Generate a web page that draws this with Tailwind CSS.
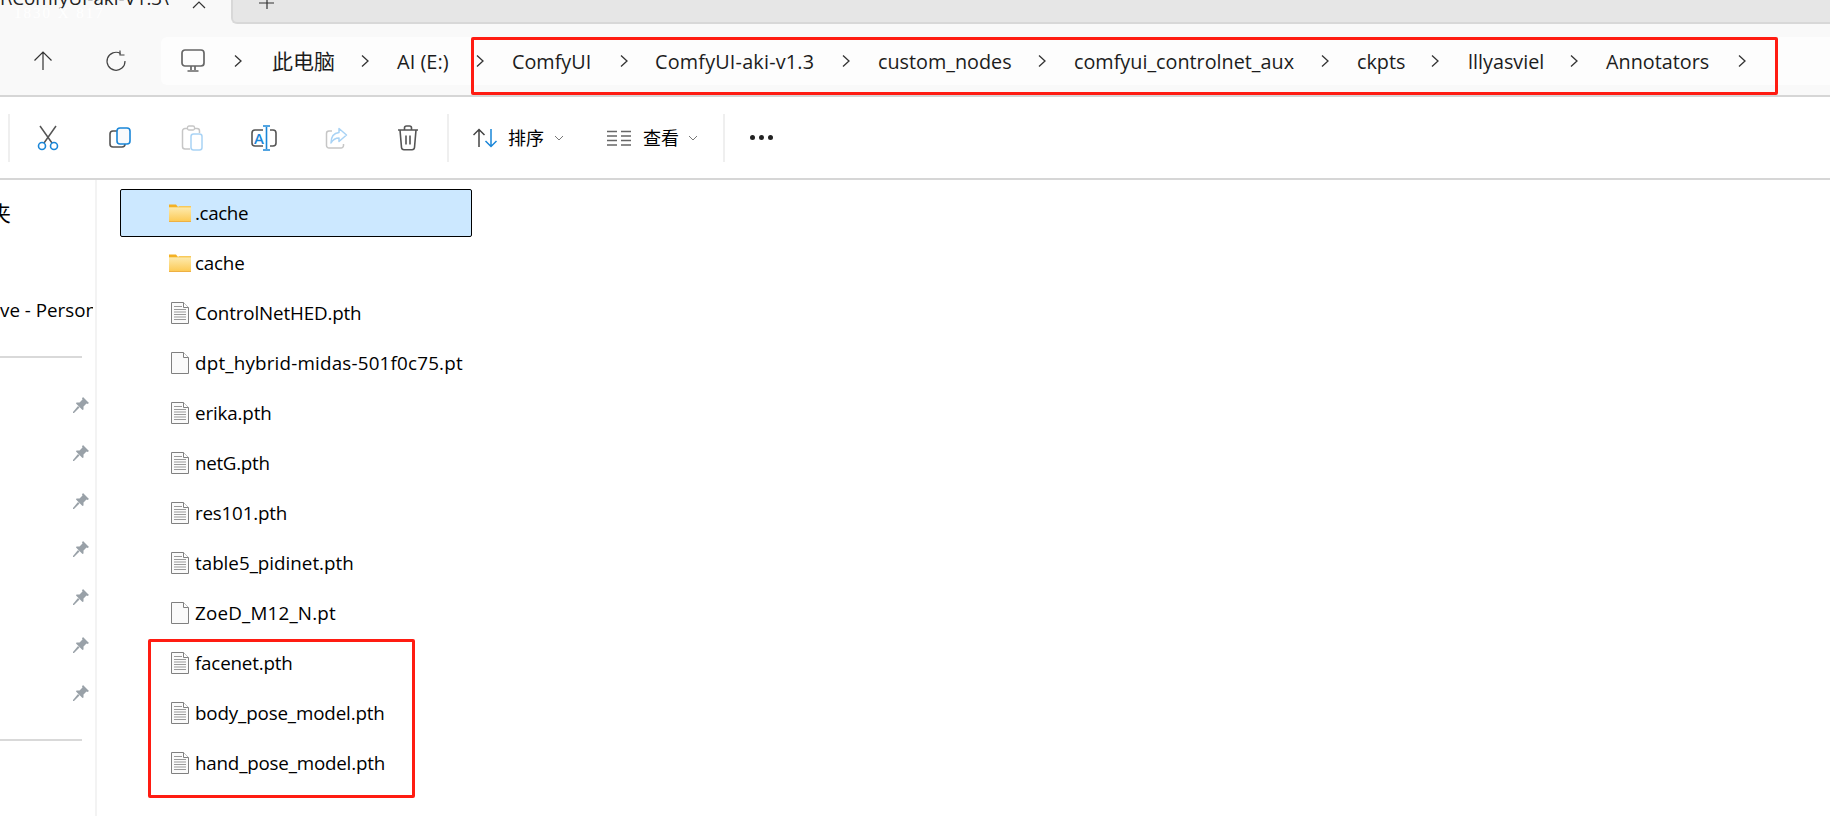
<!DOCTYPE html>
<html lang="en">
<head>
  <meta charset="UTF-8" />
  <title>ComfyUI-aki-v1.3</title>
  <script src="https://cdn.jsdelivr.net/npm/@tailwindcss/browser@4"></script>
</head>
<body class="w-[1830px] h-[816px] overflow-hidden bg-white text-black font-['Open_Sans','Noto_Sans_CJK_SC',sans-serif]">

  <!-- tab strip -->
  <div class="h-[37px] bg-[#f9f9f9] flex items-start relative overflow-hidden">
    <div class="w-[169px] h-[12px] overflow-hidden text-[18.800px] leading-[24px] text-[#222] whitespace-nowrap flex justify-end shrink-0">
      <span class="-mt-[14px]">UI\ComfyUI-aki-V1.3\</span>
    </div>
    <span class="absolute left-[14px] top-[4px] text-[15px] leading-[18px] text-white font-['Liberation_Serif',serif] tracking-[2px]">1830 X 817</span>
    <svg class="ml-[22px] shrink-0" width="16" height="10" viewBox="0 0 16 10" fill="none" stroke="#333" stroke-width="1.2"><path d="M2 8 8 2 14 8"/></svg>
    <div class="ml-[24px] h-[24px] flex-1 bg-[#e6e6e6] border-b-2 border-l-2 border-[#d8d8d8] rounded-bl-[6px] pl-[26px]">
      <svg width="16" height="10" viewBox="0 0 16 10" fill="none" stroke="#333" stroke-width="1.2"><path d="M8 0V9M0 3H15"/></svg>
    </div>
  </div>

  <!-- address row -->
  <div class="h-[60px] bg-[#f9f9f9] border-b-2 border-[#d6d6d6] flex items-start relative">
    <div class="w-[161px] h-[48px] flex items-center shrink-0">
      <svg class="ml-[33px]" width="20" height="24" viewBox="0 0 20 24" fill="none" stroke="#333" stroke-width="1.2"><path d="M10 21V3M1.500 11.500 10 3l8.500 8.500"/></svg>
      <svg class="ml-[52px]" width="22" height="22" viewBox="0 0 22 22" fill="none" stroke="#444" stroke-width="1.2"><path d="M15.500 3.500A9 9 0 1 0 20 11"/><path d="M15 0.500v4.500h4.500"/></svg>
    </div>
    <div class="flex-1 h-[48px] bg-[#fdfdfd] rounded-l-[6px] flex items-center text-[19.8px] leading-[30px] text-[#1c1c1c] whitespace-nowrap">
      <svg class="ml-[20px] shrink-0" width="24" height="24" viewBox="0 0 24 24" fill="none" stroke="#666" stroke-width="1.7"><rect x="1" y="1" width="22" height="16" rx="3"/><path d="M10 17v4M14 17v4M6.500 22h11"/></svg>
      <svg class="ml-[28px] shrink-0" width="10" height="14" viewBox="0 0 10 14" fill="none" stroke="#333" stroke-width="1.300"><path d="M2 1.500 8 7 2 12.500"/></svg>
      <span class="ml-[29px] w-[63px] text-[21px]">此电脑</span>
      <svg class="ml-[25px] shrink-0" width="10" height="14" viewBox="0 0 10 14" fill="none" stroke="#333" stroke-width="1.300"><path d="M2 1.500 8 7 2 12.500"/></svg>
      <span class="ml-[27px] w-[52px] text-[20px] mt-[1px]">AI (E:)</span>
      <svg class="ml-[26px] shrink-0" width="10" height="14" viewBox="0 0 10 14" fill="none" stroke="#333" stroke-width="1.300"><path d="M2 1.500 8 7 2 12.500"/></svg>
      <span class="ml-[27px] w-[80px] mt-[1px]">ComfyUI</span>
      <svg class="ml-[27px] shrink-0" width="10" height="14" viewBox="0 0 10 14" fill="none" stroke="#333" stroke-width="1.300"><path d="M2 1.500 8 7 2 12.500"/></svg>
      <span class="ml-[26px] w-[159px] mt-[1px] tracking-[0.2px]">ComfyUI-aki-v1.3</span>
      <svg class="ml-[27px] shrink-0" width="10" height="14" viewBox="0 0 10 14" fill="none" stroke="#333" stroke-width="1.300"><path d="M2 1.500 8 7 2 12.500"/></svg>
      <span class="ml-[27px] w-[132px] mt-[1px]">custom_nodes</span>
      <svg class="ml-[27px] shrink-0" width="10" height="14" viewBox="0 0 10 14" fill="none" stroke="#333" stroke-width="1.300"><path d="M2 1.500 8 7 2 12.500"/></svg>
      <span class="ml-[27px] w-[219px] mt-[1px]">comfyui_controlnet_aux</span>
      <svg class="ml-[27px] shrink-0" width="10" height="14" viewBox="0 0 10 14" fill="none" stroke="#333" stroke-width="1.300"><path d="M2 1.500 8 7 2 12.500"/></svg>
      <span class="ml-[27px] w-[47px] mt-[1px]">ckpts</span>
      <svg class="ml-[26px] shrink-0" width="10" height="14" viewBox="0 0 10 14" fill="none" stroke="#333" stroke-width="1.300"><path d="M2 1.500 8 7 2 12.500"/></svg>
      <span class="ml-[28px] w-[75px] mt-[1px]">lllyasviel</span>
      <svg class="ml-[26px] shrink-0" width="10" height="14" viewBox="0 0 10 14" fill="none" stroke="#333" stroke-width="1.300"><path d="M2 1.500 8 7 2 12.500"/></svg>
      <span class="ml-[27px] w-[103px] mt-[1px]">Annotators</span>
      <svg class="ml-[28px] shrink-0" width="10" height="14" viewBox="0 0 10 14" fill="none" stroke="#333" stroke-width="1.300"><path d="M2 1.500 8 7 2 12.500"/></svg>
    </div>
  </div>

  <!-- toolbar -->
  <div class="h-[83px] border-b-2 border-[#d6d6d6] flex items-center bg-white">
    <div class="ml-[8px] w-[2px] h-[48px] bg-[#efefef]"></div>
    <div class="ml-[2px] flex">
      <div class="w-[72px] h-[30px] flex items-center justify-center">
        <svg width="24" height="26" viewBox="0 0 24 26" fill="none"><path d="M4 1 16 18M20 1 8 18" stroke="#555" stroke-width="1.500"/><circle cx="6" cy="21" r="3.500" stroke="#1a86d8" stroke-width="1.600"/><circle cx="18" cy="21" r="3.500" stroke="#1a86d8" stroke-width="1.600"/></svg>
      </div>
      <div class="w-[72px] h-[30px] flex items-center justify-center">
        <svg width="24" height="22" viewBox="0 0 24 22" fill="none"><path d="M9 4H5a3 3 0 0 0-3 3v10a3 3 0 0 0 3 3h9a3 3 0 0 0 3-3" stroke="#555" stroke-width="1.600"/><rect x="9" y="1" width="13" height="16" rx="3" fill="#f8fafc" stroke="#1a86d8" stroke-width="1.600"/></svg>
      </div>
      <div class="w-[72px] h-[30px] flex items-center justify-center">
        <svg width="22" height="26" viewBox="0 0 22 26" fill="none"><path d="M9 24H4a2.500 2.500 0 0 1-2.500-2.500V6A2.500 2.500 0 0 1 4 3.500h12A2.500 2.500 0 0 1 18.500 6v2" stroke="#c6c6c6" stroke-width="1.500"/><rect x="6.500" y="1" width="7" height="4" rx="1.500" fill="#fff" stroke="#c6c6c6" stroke-width="1.300"/><rect x="10" y="9" width="11" height="16" rx="2.500" stroke="#a9d3f5" stroke-width="1.500"/></svg>
      </div>
      <div class="w-[72px] h-[30px] flex items-center justify-center">
        <svg width="26" height="26" viewBox="0 0 26 26" fill="none"><path d="M12 5H4a3 3 0 0 0-3 3v10a3 3 0 0 0 3 3h8M19 5h3a3 3 0 0 1 3 3v10a3 3 0 0 1-3 3h-3" stroke="#555" stroke-width="1.600"/><path d="M15.500 2v22M12 1h7M12 25h7" stroke="#1a86d8" stroke-width="1.600"/><text x="8" y="18.500" font-size="15" font-family="Open Sans" font-weight="600" text-anchor="middle" fill="#1a86d8">A</text></svg>
      </div>
      <div class="w-[72px] h-[30px] flex items-center justify-center">
        <svg width="23" height="22" viewBox="0 0 23 22" fill="none"><path d="M7 4H4a2.500 2.500 0 0 0-2.500 2.500v12A2.500 2.500 0 0 0 4 21h12a2.500 2.500 0 0 0 2.500-2.500V17" stroke="#c6c6c6" stroke-width="1.500"/><path d="M14 1.500 21.500 8 14 14.500V11c-4 0-6 1.500-8 5 0-6 3-10 8-10.500z" stroke="#a9d3f5" stroke-width="1.500" stroke-linejoin="round"/></svg>
      </div>
      <div class="w-[72px] h-[30px] flex items-center justify-center">
        <svg width="22" height="26" viewBox="0 0 22 26" fill="none" stroke="#555" stroke-width="1.600"><path d="M1 5h20M7.500 5V3a2 2 0 0 1 2-2h3a2 2 0 0 1 2 2v2M3 5l1.500 17.500a2.500 2.500 0 0 0 2.500 2.200h8a2.500 2.500 0 0 0 2.500-2.200L19 5"/><path d="M9 10.500v9M13 10.500v9"/></svg>
      </div>
    </div>
    <div class="ml-[3px] w-[2px] h-[48px] bg-[#efefef]"></div>
    <svg class="ml-[24px]" width="25" height="20" viewBox="0 0 25 20" fill="none" stroke-width="1.500"><path d="M6 19V1.500M0.500 7l5.500-5.500 5.500 5.500" stroke="#444"/><path d="M18 1v17.500M12.500 13l5.500 5.500 5.500-5.500" stroke="#1a86d8"/></svg>
    <span class="ml-[10px] w-[36px] text-[18px] mt-[2px]">排序</span>
    <svg class="ml-[10px]" width="10" height="6" viewBox="0 0 10 6" fill="none" stroke="#777"><path d="M1 1 5 5 9 1"/></svg>
    <svg class="ml-[43px]" width="24" height="16" viewBox="0 0 24 16" fill="none" stroke="#666" stroke-width="1.500"><path d="M0 1.500h10M0 6h10M0 10.500h10M0 15h10M14 1.500h10M14 6h10M14 10.500h10M14 15h10"/></svg>
    <span class="ml-[12px] w-[36px] text-[18px] mt-[2px]">查看</span>
    <svg class="ml-[9px]" width="10" height="6" viewBox="0 0 10 6" fill="none" stroke="#777"><path d="M1 1 5 5 9 1"/></svg>
    <div class="ml-[25px] w-[2px] h-[48px] bg-[#efefef]"></div>
    <div class="ml-[25px] flex gap-[4px]">
      <div class="w-[5px] h-[5px] rounded-full bg-[#222]"></div>
      <div class="w-[5px] h-[5px] rounded-full bg-[#222]"></div>
      <div class="w-[5px] h-[5px] rounded-full bg-[#222]"></div>
    </div>
  </div>

  <!-- body -->
  <div class="flex h-[636px]">
    <!-- nav pane -->
    <div class="w-[97px] shrink-0 border-r-2 border-[#f3f3f3] relative overflow-hidden text-[18.800px]">
      <div class="w-[93px] overflow-hidden whitespace-nowrap flex flex-col">
        <div class="h-[48px] mt-[10px] flex items-center justify-end pr-[82px] text-[21px]">夹</div>
        <div class="h-[48px] mt-[48px] flex items-center">ve - Person</div>
      </div>
      <div class="w-[82px] h-[2px] bg-[#d9d9d9] mt-[22px]"></div>
      <div class="mt-[39px] flex flex-col w-[89px] items-end gap-[32px]">
        <svg width="16" height="16" viewBox="0 0 16 16" fill="#99a1a8"><path d="M10 0 16 6 14.500 7 13.500 6.500 10.500 9.500 10.500 12.500 9.500 13 3 6.500 3.500 5.500 6.500 5.500 9.500 2.500 9 1.500z"/><path d="M5 9 6.500 10.500 1 16 0 16 0 15z"/></svg>
        <svg width="16" height="16" viewBox="0 0 16 16" fill="#99a1a8"><path d="M10 0 16 6 14.500 7 13.500 6.500 10.500 9.500 10.500 12.500 9.500 13 3 6.500 3.500 5.500 6.500 5.500 9.500 2.500 9 1.500z"/><path d="M5 9 6.500 10.500 1 16 0 16 0 15z"/></svg>
        <svg width="16" height="16" viewBox="0 0 16 16" fill="#99a1a8"><path d="M10 0 16 6 14.500 7 13.500 6.500 10.500 9.500 10.500 12.500 9.500 13 3 6.500 3.500 5.500 6.500 5.500 9.500 2.500 9 1.500z"/><path d="M5 9 6.500 10.500 1 16 0 16 0 15z"/></svg>
        <svg width="16" height="16" viewBox="0 0 16 16" fill="#99a1a8"><path d="M10 0 16 6 14.500 7 13.500 6.500 10.500 9.500 10.500 12.500 9.500 13 3 6.500 3.500 5.500 6.500 5.500 9.500 2.500 9 1.500z"/><path d="M5 9 6.500 10.500 1 16 0 16 0 15z"/></svg>
        <svg width="16" height="16" viewBox="0 0 16 16" fill="#99a1a8"><path d="M10 0 16 6 14.500 7 13.500 6.500 10.500 9.500 10.500 12.500 9.500 13 3 6.500 3.500 5.500 6.500 5.500 9.500 2.500 9 1.500z"/><path d="M5 9 6.500 10.500 1 16 0 16 0 15z"/></svg>
        <svg width="16" height="16" viewBox="0 0 16 16" fill="#99a1a8"><path d="M10 0 16 6 14.500 7 13.500 6.500 10.500 9.500 10.500 12.500 9.500 13 3 6.500 3.500 5.500 6.500 5.500 9.500 2.500 9 1.500z"/><path d="M5 9 6.500 10.500 1 16 0 16 0 15z"/></svg>
        <svg width="16" height="16" viewBox="0 0 16 16" fill="#99a1a8"><path d="M10 0 16 6 14.500 7 13.500 6.500 10.500 9.500 10.500 12.500 9.500 13 3 6.500 3.500 5.500 6.500 5.500 9.500 2.500 9 1.500z"/><path d="M5 9 6.500 10.500 1 16 0 16 0 15z"/></svg>
      </div>
      <div class="w-[82px] h-[2px] bg-[#d9d9d9] mt-[38px]"></div>
    </div>

    <!-- file list -->
    <div id="files" class="pl-[23px] pt-[9px] flex flex-col text-[18.800px] leading-[48px] text-black whitespace-nowrap">
    </div>
  </div>

  <!-- red annotation boxes -->
  <div class="absolute left-[471px] top-[37px] w-[1307px] h-[58px] border-[3px] border-[#ff1c12] rounded-[2px]"></div>
  <div class="absolute left-[148px] top-[639px] w-[267px] h-[159px] border-[3px] border-[#ff1c12] rounded-[2px]"></div>

  <script>
    const folderIcon = `<svg width="22" height="18" viewBox="0 0 22 18"><defs><linearGradient id="fold" x1="0" y1="0" x2="0" y2="1"><stop offset="0" stop-color="#fdebb0"/><stop offset="1" stop-color="#fcc850"/></linearGradient></defs><path d="M0 0.500h7l2 2.500H0z" fill="#f4b124"/><path d="M0 3h22v15H0z" fill="url(#fold)"/><path d="M0 3h9l1-1h12v1.500H0z" fill="#f8c95a"/><path d="M0 17h22v1H0z" fill="#eeb043"/></svg>`;
    const plainIcon = `<svg width="18" height="22" viewBox="0 0 18 22" fill="#fafafa" stroke="#808080"><path d="M0.500 0.500h12l5 5v16h-17z"/><path d="M12.500 0.500v5h5" fill="#fff"/></svg>`;
    const textIcon = `<svg width="18" height="22" viewBox="0 0 18 22" fill="#fafafa" stroke="#808080"><path d="M0.500 0.500h12l5 5v16h-17z"/><path d="M12.500 0.500v5h5" fill="#fff"/><path d="M3 4.500h8M3 7.500h12M3 10h12M3 12.500h12M3 15h12M3 17.500h12" stroke="#999"/></svg>`;

    // last value nudges letter spacing so the name ends where the reference does
    const files = [
      ['.cache', folderIcon, 'tracking-[-0.4px]'], ['cache', folderIcon, 'tracking-[-0.2px]'], ['ControlNetHED.pth', textIcon, 'tracking-[-0.15px]'],
      ['dpt_hybrid-midas-501f0c75.pt', plainIcon, 'tracking-[0.2px]'], ['erika.pth', textIcon, 'tracking-[-0.15px]'], ['netG.pth', textIcon, 'tracking-[-0.3px]'],
      ['res101.pth', textIcon, 'tracking-[-0.2px]'], ['table5_pidinet.pth', textIcon, ''], ['ZoeD_M12_N.pt', plainIcon, 'tracking-[0.2px]'],
      ['facenet.pth', textIcon, 'tracking-[-0.2px]'], ['body_pose_model.pth', textIcon, 'tracking-[-0.15px]'], ['hand_pose_model.pth', textIcon, 'tracking-[-0.2px]'],
    ];
    const list = document.getElementById('files');
    files.forEach(([name, icon, tracking], i) => {
      const row = document.createElement('div');
      row.className = 'w-[352px] h-[48px] mb-[2px] flex items-center rounded-[2px] border border-transparent';
      if (i === 0) row.className = 'w-[352px] h-[48px] mb-[2px] flex items-center rounded-[2px] border border-black bg-[#cce8ff]';
      row.innerHTML = `<span class="w-[22px] ml-[48px] mr-[4px] flex justify-center">${icon}</span><span class="${tracking}">${name}</span>`;
      list.appendChild(row);
    });
  </script>
</body>
</html>
